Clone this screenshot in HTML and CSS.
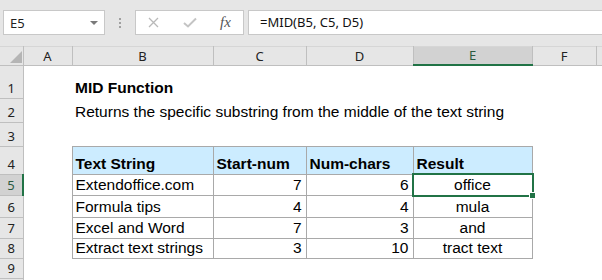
FILE: index.html
```html
<!DOCTYPE html>
<html lang="en">
<head>
    <meta charset="UTF-8">
    <title>MID Function</title>
    <link rel="stylesheet" href="styles.css">
</head>
<body>

<div class="toolbar">
    <div class="namebox"><span>E5</span><span class="caret"></span></div>
    <div class="grip"><i></i><i></i><i></i></div>
    <div class="fbtns">
        <svg class="ic-x" width="11" height="11" viewBox="0 0 11 11"><path d="M1 1L10 10M10 1L1 10" stroke="#b9b9b9" stroke-width="1.3" fill="none"/></svg>
        <svg class="ic-ok" width="14" height="11" viewBox="0 0 14 11"><path d="M1 6L5 9.5L13 1.5" stroke="#c4c4c4" stroke-width="2" fill="none"/></svg>
        <span class="fx">fx</span>
    </div>
    <div class="fbar">=MID(B5, C5, D5)</div>
</div>

<table class="sheet">
    <colgroup>
        <col class="w-hd"><col class="w-a"><col class="w-b"><col class="w-c"><col class="w-d"><col class="w-e"><col class="w-f"><col class="w-g">
    </colgroup>
    <tr class="h-col">
        <th class="corner"><svg width="14" height="14" viewBox="0 0 14 14"><path d="M13 1V13H1Z" fill="#b5b5b5"/></svg></th>
        <th>A</th><th>B</th><th>C</th><th>D</th><th class="cur">E</th><th>F</th><th></th>
    </tr>
    <tr class="h-1">
        <th class="rn">1</th><td></td><td class="title" colspan="5">MID Function</td><td></td>
    </tr>
    <tr class="h-2">
        <th class="rn">2</th><td></td><td class="txt" colspan="5">Returns the specific substring from the middle of the text string</td><td></td>
    </tr>
    <tr class="h-3">
        <th class="rn">3</th><td></td><td></td><td></td><td></td><td></td><td></td><td></td>
    </tr>
    <tr class="h-4">
        <th class="rn">4</th><td></td>
        <td class="cell head">Text String</td>
        <td class="cell head">Start-num</td>
        <td class="cell head">Num-chars</td>
        <td class="cell head">Result</td>
        <td></td><td></td>
    </tr>
    <tr class="h-5">
        <th class="rn cur">5</th><td></td>
        <td class="cell">Extendoffice.com</td>
        <td class="cell num">7</td>
        <td class="cell num">6</td>
        <td class="cell mid sel">office</td>
        <td></td><td></td>
    </tr>
    <tr class="h-6">
        <th class="rn">6</th><td></td>
        <td class="cell">Formula tips</td>
        <td class="cell num">4</td>
        <td class="cell num">4</td>
        <td class="cell mid">mula</td>
        <td></td><td></td>
    </tr>
    <tr class="h-7">
        <th class="rn">7</th><td></td>
        <td class="cell">Excel and Word</td>
        <td class="cell num">7</td>
        <td class="cell num">3</td>
        <td class="cell mid">and</td>
        <td></td><td></td>
    </tr>
    <tr class="h-8">
        <th class="rn">8</th><td></td>
        <td class="cell">Extract text strings</td>
        <td class="cell num">3</td>
        <td class="cell num">10</td>
        <td class="cell mid">tract text</td>
        <td></td><td></td>
    </tr>
    <tr class="h-9">
        <th class="rn">9</th><td></td><td></td><td></td><td></td><td></td><td></td><td></td>
    </tr>
    <tr class="h-10">
        <th class="rn"></th><td></td><td></td><td></td><td></td><td></td><td></td><td></td>
    </tr>
</table>

</body>
</html>
```

FILE: styles.css
```css
body {
    margin: 0;
    background-color: #fff;
    font-family: "Liberation Sans", Arial, sans-serif;
    overflow: hidden;
}
.toolbar {
    display: flex;
    align-items: flex-start;
    height: 46px;
    box-sizing: border-box;
    padding: 10px 0 0 3px;
    background-color: #e6e6e6;
}
.namebox, .fbtns, .fbar {
    height: 25px;
    box-sizing: border-box;
    border: 1px solid #c8c8c8;
    background-color: #fff;
}
.namebox {
    width: 102px;
    display: flex;
    align-items: center;
    justify-content: space-between;
    padding: 0 6px 0 6px;
    font: 13px "Noto Sans", sans-serif;
    color: #222;
}
.caret {
    border-left: 4px solid transparent;
    border-right: 4px solid transparent;
    border-top: 4px solid #7a7a7a;
}
.grip {
    width: 30px;
    height: 25px;
    display: flex;
    flex-direction: column;
    align-items: center;
    justify-content: center;
    gap: 2px;
}
.grip i {
    width: 2px;
    height: 2px;
    background-color: #a0a0a0;
}
.fbtns {
    width: 109px;
    display: flex;
    align-items: center;
    padding-left: 12px;
}
.ic-ok {
    margin-left: 24px;
}
.fx {
    margin-left: 23px;
    font: italic 15px "Liberation Serif", serif;
    color: #555;
}
.fbar {
    flex: 1;
    margin-left: 4px;
    border-right: none;
    padding-left: 11px;
    font: 13px "Noto Sans", sans-serif;
    line-height: 23px;
    color: #111;
}

/* sheet grid */
.sheet {
    border-collapse: collapse;
    table-layout: fixed;
    width: 602px;
}
.w-hd { width: 23px; }
.w-a { width: 49px; }
.w-b { width: 141px; }
.w-c { width: 93px; }
.w-d { width: 107px; }
.w-e { width: 119px; }
.w-f { width: 64px; }
.w-g { width: 6px; }

.sheet th {
    padding: 0;
    background-color: #e6e6e6;
    font: normal 13px "Noto Sans", sans-serif;
    line-height: 16px;
    color: #222;
    border-right: 1px solid #bfbfbf;
    border-bottom: 1px solid #bfbfbf;
    vertical-align: bottom;
    padding-bottom: 2px;
    overflow: hidden;
}
.h-col th {
    height: 16px;
    border-top: 1px solid #d6d6d6;
    padding-bottom: 1px;
}
.corner {
    text-align: right;
}
.corner svg {
    display: block;
    margin: 0 0 0 auto;
}
.sheet th.cur {
    background-color: #d2d2d2;
    color: #2b5a40;
}
.h-col th.cur {
    border-bottom: 2px solid #217346;
}
.rn.cur {
    border-right: 2px solid #217346;
}

.h-1 { height: 33px; }
.h-2 { height: 24px; }
.h-3 { height: 24px; }
.h-4 { height: 28px; }
.h-5 { height: 21px; }
.h-6 { height: 22px; }
.h-7 { height: 21px; }
.h-8 { height: 20px; }
.h-9 { height: 20px; }
.h-10 { height: 20px; }

.sheet td {
    padding: 0 3px 1px 3px;
    font-size: 15.5px;
    line-height: 18px;
    color: #000;
    vertical-align: bottom;
    white-space: nowrap;
}
.title {
    font-weight: bold;
}
.cell {
    border: 1px solid #a9a9a9;
}
.head {
    background-color: #ccecff;
    font-weight: bold;
}
.num {
    text-align: right;
    padding-right: 4px !important;
}
.mid {
    text-align: center;
}
.sel {
    position: relative;
}
.sel::after {
    content: "";
    position: absolute;
    top: -2px;
    left: -2px;
    right: -2px;
    bottom: -2px;
    border: 2px solid #217346;
}
.sel::before {
    content: "";
    position: absolute;
    right: -4px;
    bottom: -4px;
    width: 5px;
    height: 5px;
    background-color: #217346;
    border: 1px solid #fff;
    z-index: 1;
}
```
